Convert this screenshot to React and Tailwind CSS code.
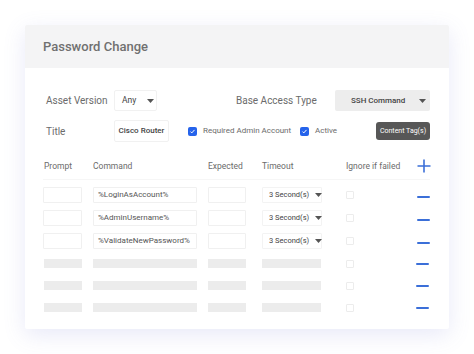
import React from "react";

const ROWS = [
  { cmd: "%LoginAsAccount%" },
  { cmd: "%AdminUsername%" },
  { cmd: "%ValidateNewPassword%" },
];

function Caret({ className = "" }) {
  return (
    <svg width="7" height="4" viewBox="0 0 7 4" className={`shrink-0 ${className}`}>
      <path d="M0 0h7L3.5 4z" fill="#555" />
    </svg>
  );
}

function Check() {
  return (
    <span className="w-[9px] h-[9px] rounded-[2px] bg-[#2563eb] flex items-center justify-center">
      <svg width="7" height="7" viewBox="0 0 7 7">
        <path d="M1.5 3.6l1.3 1.3 2.7-3" stroke="white" strokeWidth="1" fill="none" />
      </svg>
    </span>
  );
}

function Minus() {
  return <span className="block w-[13px] h-[2px] bg-[#3b6fd8] rounded-full" />;
}

export default function App() {
  return (
    <div
      className="w-[474px] h-[354px] bg-white pl-[25px] pt-[25px] text-[#6b6b6b] whitespace-nowrap"
      style={{ fontFamily: "Roboto, Inter, sans-serif" }}
    >
      <div className="w-[424px] h-[304px] bg-white rounded-[2px] shadow-[0_6px_22px_rgba(110,120,210,0.16)] overflow-hidden">
        {/* Header */}
        <div className="h-[43px] bg-[#f4f4f5] pl-[18px] flex items-center">
          <span className="text-[13px] font-medium text-[#707070]">Password Change</span>
        </div>

        <div className="pl-[18px]">
          {/* Row 1 */}
          <div className="mt-[22px] h-[21px] flex items-center">
            <span className="ml-[3px] w-[68px] shrink-0 text-[10px]">Asset Version</span>
            <div className="w-[43px] shrink-0 h-[21px] border border-[#f1f1f1] rounded-[2px] flex items-center pl-[7px] gap-[11px]">
              <span className="text-[8.5px] text-[#444]">Any</span>
              <Caret />
            </div>
            <span className="ml-[79px] w-[99px] shrink-0 text-[10px]">Base Access Type</span>
            <div className="w-[95px] shrink-0 h-[21px] bg-[#ededed] rounded-[2px] flex items-center pl-[16px]">
              <span className="text-[8px] text-[#444] font-medium w-[68px]">SSH Command</span>
              <Caret />
            </div>
          </div>

          {/* Row 2 */}
          <div className="mt-[9px] h-[22px] flex items-center">
            <span className="ml-[3px] w-[68px] shrink-0 text-[10px]">Title</span>
            <div className="w-[55px] shrink-0 h-[22px] border border-[#f1f1f1] rounded-[2px] flex items-center justify-center">
              <span className="text-[8px] text-[#444] font-medium">Cisco Router</span>
            </div>
            <span className="ml-[19px]"><Check /></span>
            <span className="ml-[6px] w-[97px] shrink-0 text-[8px]">Required Admin Account</span>
            <span><Check /></span>
            <span className="ml-[6px] text-[8px] w-[61px] shrink-0">Active</span>
            <div className="w-[54px] shrink-0 h-[18px] bg-[#575757] rounded-[3px] flex items-center justify-center">
              <span className="text-[7px] text-white">Content Tag(s)</span>
            </div>
          </div>

          {/* Table header */}
          <div className="mt-[14px] h-[20px] flex items-center text-[8.5px]">
            <span className="w-[50px] shrink-0 pl-[1px]">Prompt</span>
            <span className="w-[115px] shrink-0">Command</span>
            <span className="w-[54px] shrink-0">Expected</span>
            <span className="w-[84px] shrink-0">Timeout</span>
            <span className="w-[71px] shrink-0">Ignore if failed</span>
            <svg width="14" height="14" viewBox="0 0 14 14" className="shrink-0">
              <path d="M7 0.5v13M0.5 7h13" stroke="#3b6fd8" strokeWidth="1.6" />
            </svg>
          </div>
          <div className="w-[387px] h-px bg-[#f6f6f6] mt-[3px]" />

          {/* Data rows */}
          <div className="mt-[7px] flex flex-col gap-[7px]">
            {ROWS.map((r) => (
              <div key={r.cmd} className="h-[16px] flex items-center">
                <span className="w-[39px] shrink-0 h-[16px] border border-[#f0f0f0] rounded-[1px]" />
                <span className="ml-[11px] w-[104px] shrink-0 h-[16px] border border-[#f0f0f0] rounded-[1px] flex items-center pl-[4px] text-[8px] text-[#555]">
                  {r.cmd}
                </span>
                <span className="ml-[11px] w-[38px] shrink-0 h-[16px] border border-[#f0f0f0] rounded-[1px]" />
                <span className="ml-[16px] w-[60px] shrink-0 h-[16px] border border-[#f3f3f3] rounded-[1px] flex items-center pl-[6px] gap-[6px] text-[7.5px] text-[#444]">
                  3 Second(s)
                  <Caret />
                </span>
                <span className="ml-[24px] w-[71px] shrink-0 flex">
                  <span className="w-[8px] h-[8px] border border-[#ececec] rounded-[1px]" />
                </span>
                <span className="mt-[4px]"><Minus /></span>
              </div>
            ))}
          </div>

          {/* Placeholder rows */}
          <div className="mt-[10px] flex flex-col gap-[13px]">
            {[0, 1, 2].map((i) => (
              <div key={i} className="h-[9px] flex items-center">
                <span className="w-[38px] shrink-0 h-[9px] bg-[#ececec] ml-[1px]" />
                <span className="ml-[11px] w-[104px] shrink-0 h-[9px] bg-[#ececec]" />
                <span className="ml-[11px] w-[38px] shrink-0 h-[9px] bg-[#ececec]" />
                <span className="ml-[16px] w-[59px] shrink-0 h-[9px] bg-[#ececec]" />
                <span className="ml-[25px] w-[70px] shrink-0 flex">
                  <span className="w-[8px] h-[8px] border border-[#ececec] rounded-[1px]" />
                </span>
                <Minus />
              </div>
            ))}
          </div>
        </div>
      </div>
    </div>
  );
}
